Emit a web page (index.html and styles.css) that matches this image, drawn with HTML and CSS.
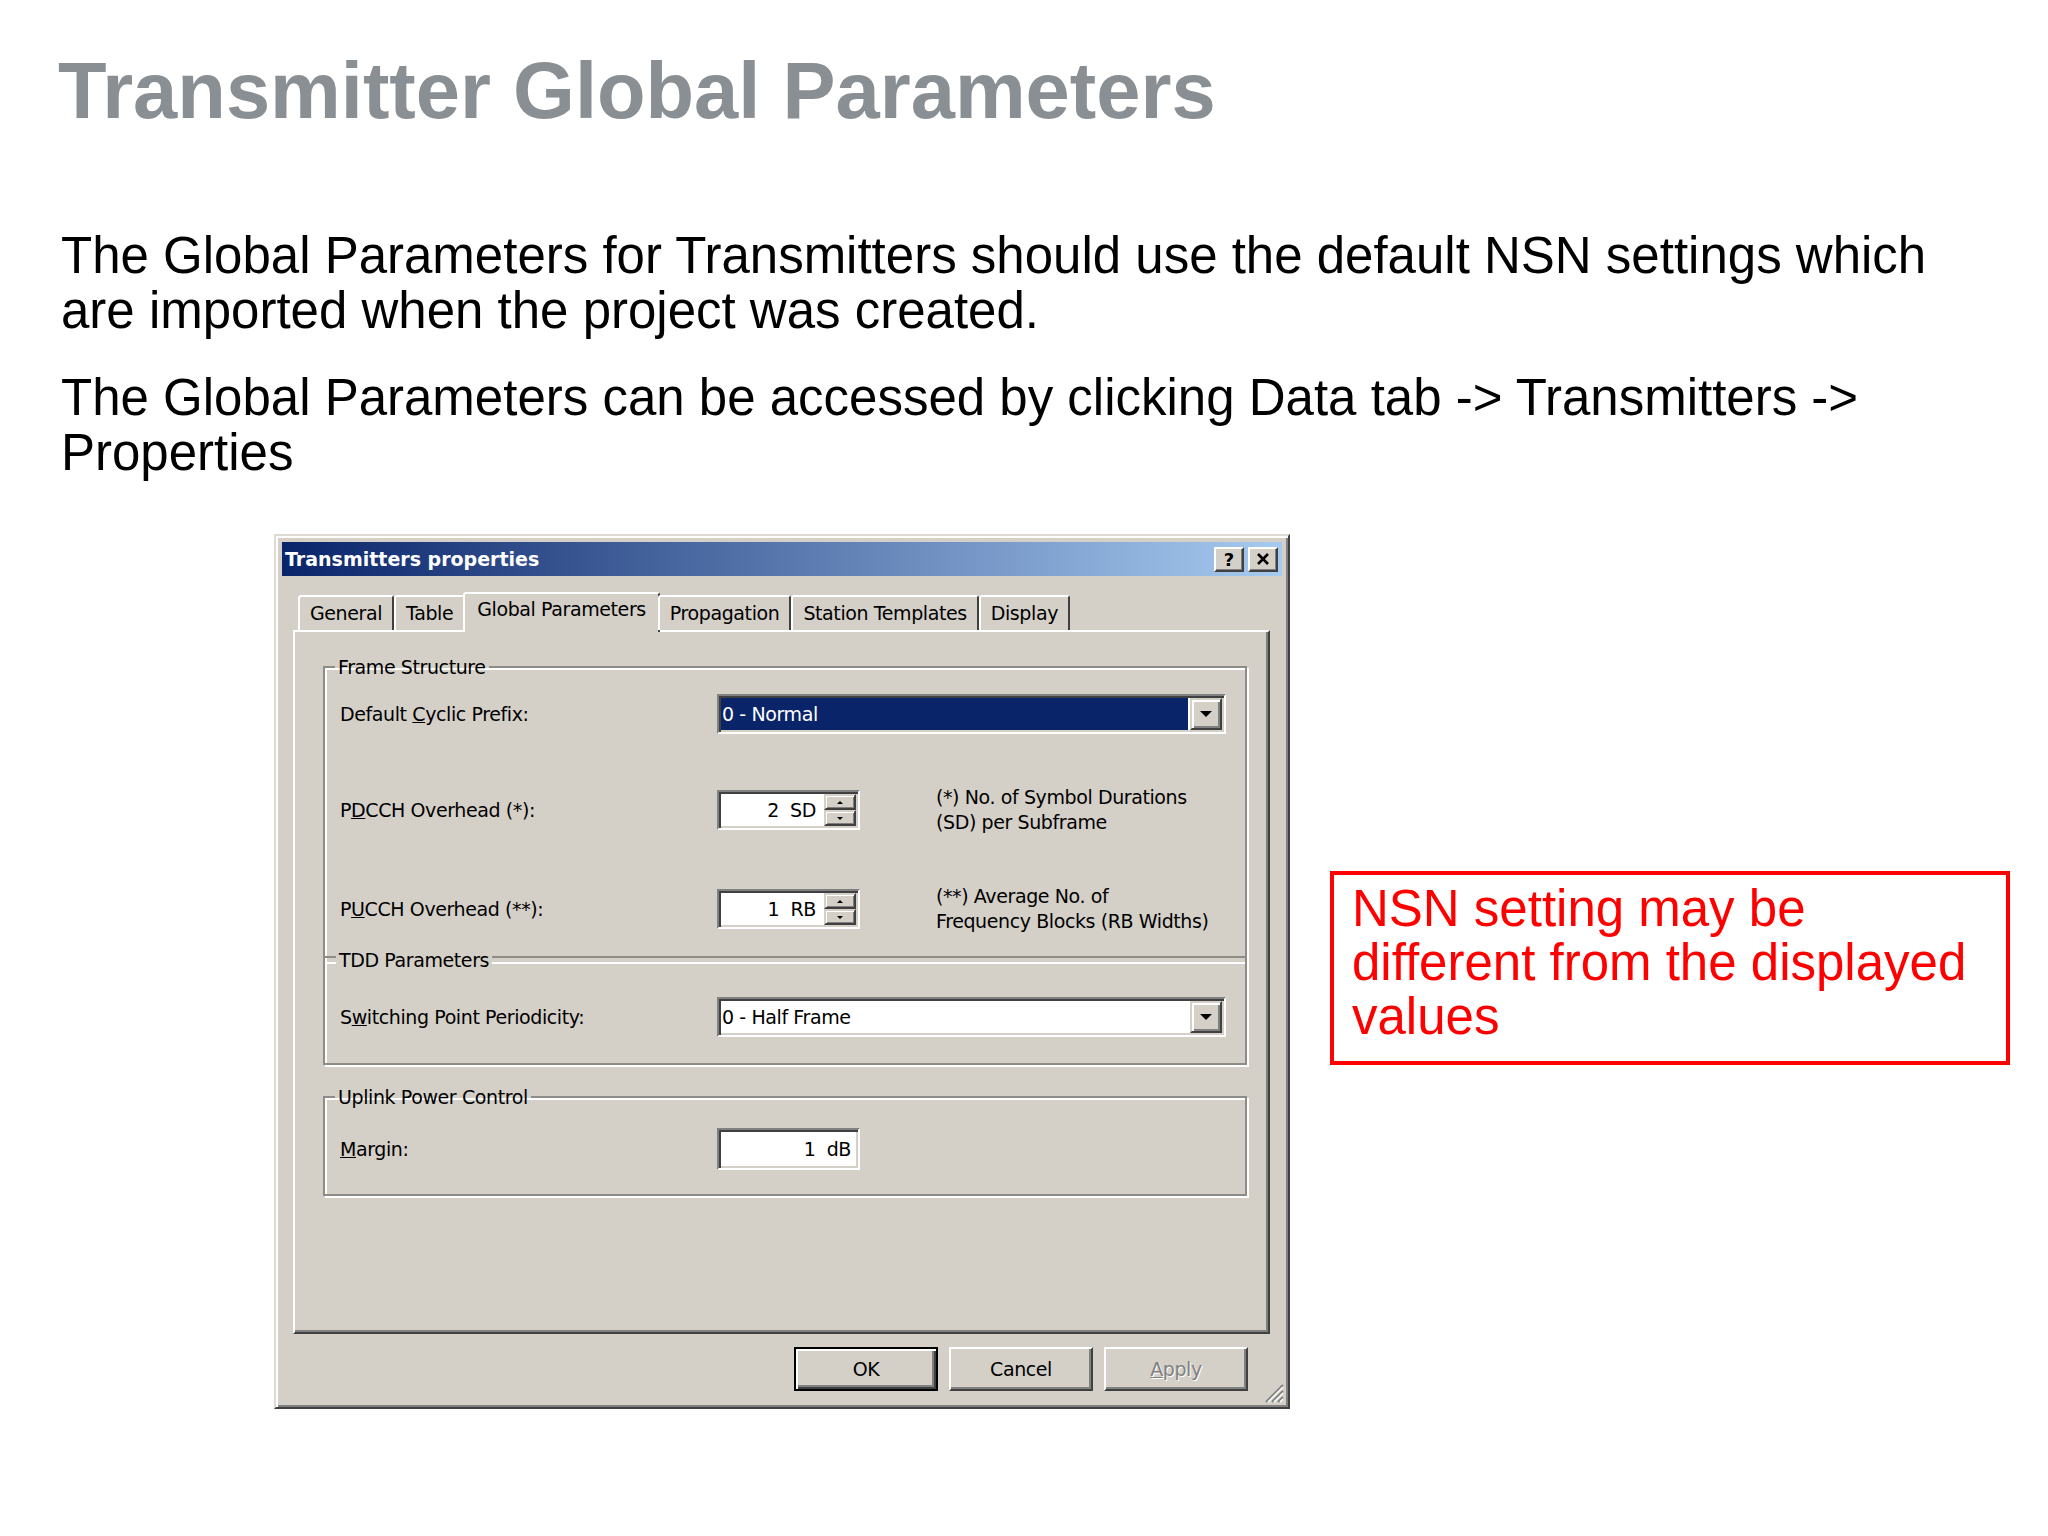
FILE: index.html
```html
<!DOCTYPE html>
<html>
<head>
<meta charset="utf-8">
<title>Transmitter Global Parameters</title>
<link rel="stylesheet" href="styles.css">
</head>
<body>
<h1 class="title">Transmitter Global Parameters</h1>
<p class="para para1">The Global Parameters for Transmitters should use the default NSN settings which are imported when the project was created.</p>
<p class="para para2">The Global Parameters can be accessed by clicking Data tab -&gt; Transmitters -&gt; Properties</p>

<div class="row">
  <div class="dialog">
    <div class="titlebar">
      <span class="title-text">Transmitters properties</span>
      <div class="tb-buttons">
        <span class="tb-btn tb-help">?</span>
        <span class="tb-btn"><svg width="14" height="12" viewBox="0 0 14 12"><path d="M2 1 L12 11 M12 1 L2 11" stroke="#000" stroke-width="2.6" fill="none"/></svg></span>
      </div>
    </div>

    <div class="tabs">
      <div class="tab">General</div>
      <div class="tab">Table</div>
      <div class="tab active">Global Parameters</div>
      <div class="tab">Propagation</div>
      <div class="tab">Station Templates</div>
      <div class="tab">Display</div>
    </div>

    <div class="panel">
      <fieldset class="group g1">
        <legend>Frame Structure</legend>
        <div class="frow r-a">
          <span class="lbl">Default <u>C</u>yclic Prefix:</span>
          <div class="combo sel">
            <span class="combo-val">0 - Normal</span>
            <span class="drop-btn"><i class="tri-down"></i></span>
          </div>
        </div>
        <div class="frow r-b">
          <span class="lbl">P<u>D</u>CCH Overhead (*):</span>
          <div class="spin">
            <span class="spin-val">2&nbsp; SD</span>
            <span class="spin-btns"><span><i class="tri-up"></i></span><span><i class="tri-dn"></i></span></span>
          </div>
          <span class="note">(*) No. of Symbol Durations<br>(SD) per Subframe</span>
        </div>
        <div class="frow r-c">
          <span class="lbl">P<u>U</u>CCH Overhead (**):</span>
          <div class="spin">
            <span class="spin-val">1&nbsp; RB</span>
            <span class="spin-btns"><span><i class="tri-up"></i></span><span><i class="tri-dn"></i></span></span>
          </div>
          <span class="note">(**) Average No. of<br>Frequency Blocks (RB Widths)</span>
        </div>
        <div class="sep"><span class="sep-lbl">TDD Parameters</span></div>
        <div class="frow r-d">
          <span class="lbl">S<u>w</u>itching Point Periodicity:</span>
          <div class="combo">
            <span class="combo-val">0 - Half Frame</span>
            <span class="drop-btn"><i class="tri-down"></i></span>
          </div>
        </div>
      </fieldset>

      <fieldset class="group g2">
        <legend>Uplink Power Control</legend>
        <div class="frow r-m">
          <span class="lbl"><u>M</u>argin:</span>
          <div class="spin">
            <span class="spin-val plain">1&nbsp; dB</span>
          </div>
        </div>
      </fieldset>
    </div>

    <div class="buttons">
      <span class="btn btn-default">OK</span>
      <span class="btn">Cancel</span>
      <span class="btn btn-disabled"><u>A</u>pply</span>
    </div>

    <svg class="grip" width="22" height="22" viewBox="0 0 22 22">
      <path d="M21 4 L4 21 M21 10 L10 21 M21 16 L16 21" stroke="#808080" stroke-width="2" fill="none"/>
      <path d="M21 6 L6 21 M21 12 L12 21 M21 18 L18 21" stroke="#fff" stroke-width="1.4" fill="none"/>
    </svg>
  </div>

  <div class="note-box">NSN setting may be<br>different from the displayed<br>values</div>
</div>
</body>
</html>
```

FILE: styles.css
```css
* { box-sizing: border-box; }

html, body {
  margin: 0;
  padding: 0;
  background: #ffffff;
}

body {
  width: 2048px;
  height: 1536px;
  overflow: hidden;
  font-family: "Liberation Sans", Arial, sans-serif;
  color: #000;
}

.title {
  margin: 46px 0 0 58px;
  font-size: 79.5px;
  line-height: 90px;
  font-weight: bold;
  color: #8a8f94;
}

.para {
  margin: 0 0 0 61px;
  width: 1900px;
  font-size: 51px;
  line-height: 55px;
}
.para1 { margin-top: 92px; }
.para2 { margin-top: 32px; }

.row {
  display: flex;
  align-items: flex-start;
  gap: 40px;
  margin: 54px 0 0 274px;
}

/* ---------- dialog ---------- */
.dialog {
  position: relative;
  width: 1016px;
  background: #d4d0c8;
  border: 2px solid;
  border-color: #dedbd4 #404040 #404040 #dedbd4;
  box-shadow: inset 2px 2px 0 #ffffff, inset -2px -2px 0 #808080;
  padding: 6px;
  font-family: "DejaVu Sans", Verdana, sans-serif;
  font-size: 19px;
  letter-spacing: -0.4px;
  color: #000;
}

.titlebar {
  height: 34px;
  display: flex;
  align-items: center;
  justify-content: space-between;
  padding: 0 4px 0 3px;
  background: linear-gradient(to right, #0a246a 0%, #a6caf0 100%);
}
.title-text {
  color: #fff;
  font-weight: bold;
  letter-spacing: 0;
  line-height: 34px;
}
.tb-buttons {
  display: flex;
  gap: 4px;
}
.tb-btn {
  width: 30px;
  height: 25px;
  display: flex;
  align-items: center;
  justify-content: center;
  background: #d4d0c8;
  border: 2px solid;
  border-color: #ffffff #404040 #404040 #ffffff;
  box-shadow: inset -1px -1px 0 #808080;
}
.tb-help {
  font-weight: bold;
  font-size: 18px;
  letter-spacing: 0;
}

/* tabs */
.tabs {
  position: relative;
  z-index: 1;
  display: flex;
  align-items: flex-end;
  height: 38px;
  margin: 16px 0 0 16px;
}
.tab {
  height: 35px;
  padding: 0 10px;
  border: 2px solid;
  border-bottom: none;
  border-color: #ffffff #404040 transparent #ffffff;
  border-radius: 3px 3px 0 0;
  line-height: 33px;
  background: #d4d0c8;
  white-space: nowrap;
}
.tab.active {
  height: 40px;
  margin: 0 -2px -2px;
  padding: 0 12px;
  line-height: 30px;
}

/* panel */
.panel {
  height: 704px;
  margin: 0 12px 0 11px;
  border: 2px solid;
  border-color: #ffffff #404040 #404040 #ffffff;
  box-shadow: inset -2px -2px 0 #808080;
  padding: 25px 21px 0 28px;
}

.group {
  margin: 0;
  padding: 0 0 26px;
  min-width: 0;
  border: 2px solid #8e8c86;
  box-shadow: inset 2px 2px 0 #ffffff, 2px 2px 0 #ffffff;
}
.group legend {
  margin-left: 10px;
  padding: 0 3px;
  line-height: 20px;
}
.g2 {
  margin-top: 22px;
  padding-bottom: 24px;
}

.frow {
  display: grid;
  grid-template-columns: 376px 143px 1fr;
  align-items: center;
  padding: 0 19px 0 15px;
}
.r-a { margin-top: 17px; height: 40px; }
.r-b { margin-top: 51px; height: 50px; }
.r-c { margin-top: 49px; height: 50px; }
.r-d { margin-top: 27px; height: 40px; }
.r-m { margin-top: 21px; height: 42px; }

.frow .lbl { white-space: nowrap; padding-left: 0; }
.frow > .lbl { margin-left: 0; }
.frow { grid-template-columns: 377px 143px 1fr; }

.sep {
  display: flex;
  align-items: center;
  height: 20px;
  margin-top: 16px;
}
.sep::before,
.sep::after {
  content: "";
  height: 4px;
  border-top: 2px solid #8e8c86;
  border-bottom: 2px solid #ffffff;
}
.sep::before { width: 11px; }
.sep::after { flex: 1; }
.sep-lbl { padding: 0 3px; line-height: 20px; }

/* combo */
.combo {
  grid-column: 2 / 4;
  height: 40px;
  display: flex;
  background: #ffffff;
  border: 2px solid;
  border-color: #808080 #ffffff #ffffff #808080;
  box-shadow: inset 2px 2px 0 #404040, inset -2px -2px 0 #d4d0c8;
  padding: 2px;
}
.combo-val {
  flex: 1;
  padding-left: 1px;
  line-height: 32px;
  white-space: nowrap;
}
.combo.sel .combo-val {
  background: #0a246a;
  color: #ffffff;
  margin-right: 2px;
}
.drop-btn {
  width: 32px;
  display: flex;
  align-items: center;
  justify-content: center;
  background: #d4d0c8;
  border: 2px solid;
  border-color: #d4d0c8 #404040 #404040 #d4d0c8;
  box-shadow: inset 2px 2px 0 #ffffff, inset -2px -2px 0 #808080;
}
.tri-down {
  width: 0;
  height: 0;
  border-left: 6px solid transparent;
  border-right: 6px solid transparent;
  border-top: 6px solid #000;
}

/* spin */
.spin {
  grid-column: 2;
  height: 40px;
  display: flex;
  background: #ffffff;
  border: 2px solid;
  border-color: #808080 #ffffff #ffffff #808080;
  box-shadow: inset 2px 2px 0 #404040, inset -2px -2px 0 #d4d0c8;
  padding: 2px;
}
.r-m .spin { height: 42px; }
.spin-val {
  flex: 1;
  text-align: right;
  padding-right: 8px;
  line-height: 32px;
  white-space: nowrap;
}
.spin-val.plain { padding-right: 5px; line-height: 34px; }
.spin-btns {
  width: 32px;
  display: flex;
  flex-direction: column;
}
.spin-btns > span {
  flex: 1;
  display: flex;
  align-items: center;
  justify-content: center;
  background: #d4d0c8;
  border: 2px solid;
  border-color: #d4d0c8 #404040 #404040 #d4d0c8;
  box-shadow: inset 1px 1px 0 #ffffff, inset -1px -1px 0 #808080;
}
.tri-up, .tri-dn {
  width: 0;
  height: 0;
  border-left: 3px solid transparent;
  border-right: 3px solid transparent;
}
.tri-up { border-bottom: 3px solid #000; }
.tri-dn { border-top: 3px solid #000; }

.note {
  grid-column: 3;
  margin-left: 76px;
  line-height: 25px;
  white-space: nowrap;
}

/* buttons */
.buttons {
  display: flex;
  justify-content: flex-end;
  gap: 11px;
  margin: 13px 34px 10px 0;
}
.btn {
  width: 144px;
  height: 44px;
  display: flex;
  align-items: center;
  justify-content: center;
  background: #d4d0c8;
  border: 2px solid;
  border-color: #ffffff #404040 #404040 #ffffff;
  box-shadow: inset -2px -2px 0 #808080;
}
.btn-default {
  border: 2px solid #000;
  box-shadow: inset 2px 2px 0 #ffffff, inset -2px -2px 0 #404040, inset -4px -4px 0 #808080;
}
.btn-disabled {
  color: #808080;
  text-shadow: 1px 1px 0 #ffffff;
}

.grip {
  position: absolute;
  right: 4px;
  bottom: 4px;
}

/* note box */
.note-box {
  margin-top: 337px;
  width: 680px;
  border: 4px solid #ff0000;
  padding: 7px 10px 17px 18px;
  color: #ff0000;
  font-size: 51px;
  line-height: 54px;
}
```
